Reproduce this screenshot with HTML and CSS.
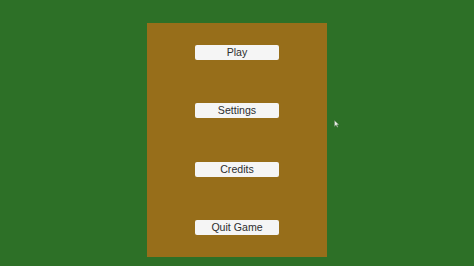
FILE: index.html
```html
<!DOCTYPE html>
<html>
<head>
<meta charset="utf-8">
<link rel="stylesheet" href="styles.css">
</head>
<body>
<div class="screen">
  <div class="panel">
    <button class="btn">Play</button>
    <button class="btn">Settings</button>
    <button class="btn">Credits</button>
    <button class="btn">Quit Game</button>
  </div>
  <svg class="cursor" width="6" height="8" viewBox="0 0 6 8"><path d="M0.5 0.5 L0.5 6.5 L2 5 L3.2 7.3 L4 6.9 L2.9 4.7 L5 4.7 Z" fill="#e8ece6" stroke="#5a7a55" stroke-width="0.4"/></svg>
</div>
</body>
</html>
```
FILE: styles.css
```css
html, body {
  margin: 0;
  padding: 0;
  background: #2d7027;
}
.screen {
  position: relative;
  width: 474px;
  height: 266px;
  box-sizing: border-box;
  padding: 23px 0 0 147px;
}
.panel {
  width: 180px;
  height: 234px;
  background: #976e1a;
  box-sizing: border-box;
  padding: 22px 0 22px;
  display: flex;
  flex-direction: column;
  align-items: center;
  justify-content: space-between;
}
.btn {
  width: 84px;
  height: 14.7px;
  padding: 1px 0 0;
  border: none;
  border-radius: 2px;
  background: #f5f5f5;
  color: #2e2e2e;
  font-family: "Liberation Sans", Arial, sans-serif;
  font-size: 10.6px;
  line-height: 13.7px;
  text-align: center;
}
.cursor {
  position: absolute;
  left: 334px;
  top: 120px;
}
```
